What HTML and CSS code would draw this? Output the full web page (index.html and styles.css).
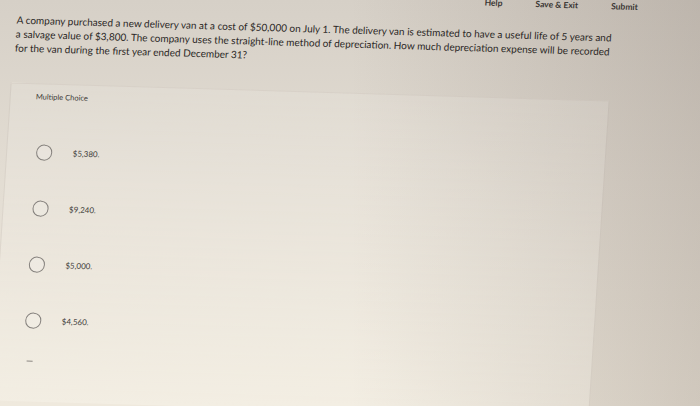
FILE: index.html
```html
<!DOCTYPE html>
<html lang="en">
<head>
<meta charset="utf-8">
<title>Multiple Choice</title>
<link rel="stylesheet" href="styles.css">
</head>
<body>
<div class="page">
  <header class="topbar">
    <nav class="nav">
      <span class="nav-item">Help</span>
      <span class="nav-item">Save &amp; Exit</span>
      <span class="nav-item">Submit</span>
    </nav>
  </header>
  <p class="question">A company purchased a new delivery van at a cost of $50,000 on July 1. The delivery van is estimated to have a useful life of 5 years and<br>a salvage value of $3,800. The company uses the straight-line method of depreciation. How much depreciation expense will be recorded<br>for the van during the first year ended December 31?</p>
  <section class="panel">
    <div class="panel-title">Multiple Choice</div>
    <ul class="choices">
      <li class="choice"><span class="radio"></span><span class="choice-text">$5,380.</span></li>
      <li class="choice"><span class="radio"></span><span class="choice-text">$9,240.</span></li>
      <li class="choice"><span class="radio"></span><span class="choice-text">$5,000.</span></li>
      <li class="choice"><span class="radio"></span><span class="choice-text">$4,560.</span></li>
    </ul>
    <div class="dash"></div>
  </section>
</div>
</body>
</html>
```
FILE: styles.css
```css
html, body {
  margin: 0;
  padding: 0;
  height: 100%;
  overflow: hidden;
}
body {
  width: 700px;
  height: 406px;
  background:
    linear-gradient(to right, rgba(110, 96, 88, 0) 50%, rgba(110, 96, 88, 0.24) 100%),
    linear-gradient(to bottom, #d6d0c7 0%, #e3ddd3 45%, #efe9dd 100%);
  font-family: Lato, "Open Sans", sans-serif;
  color: #35322f;
}
.page {
  margin-top: -30px;
  width: 700px;
  transform-origin: 0 30px;
  transform: matrix(1, 0.03, -0.065, 1, 0, 0);
}
.topbar {
  height: 30px;
  display: flex;
  align-items: center;
  justify-content: flex-end;
  padding-right: 63px;
}
.nav {
  display: flex;
  gap: 33px;
  padding-top: 5px;
}
.nav-item {
  font-size: 8.5px;
  font-weight: 700;
  color: #3a3633;
}
.question {
  margin: 12px 0 0 18px;
  font-size: 10px;
  line-height: 14px;
  white-space: nowrap;
  color: #2a2725;
}
.panel {
  margin: 28px 0 0 16px;
  width: 599px;
  height: 318px;
  box-sizing: border-box;
  padding: 8px 0 0 25px;
  border: 1px solid rgba(120, 108, 98, 0.12);
  border-bottom: 0;
  background: linear-gradient(to bottom, rgba(255, 253, 248, 0.12), rgba(255, 252, 244, 0.25));
}
.panel-title {
  font-size: 7.5px;
  line-height: 10px;
  color: #3d3a37;
}
.choices {
  list-style: none;
  margin: 42px 0 0 4px;
  padding: 0;
  display: flex;
  flex-direction: column;
  gap: 40px;
}
.choice {
  display: flex;
  align-items: center;
  height: 16px;
  gap: 21px;
}
.radio {
  width: 13.5px;
  height: 13.5px;
  border: 1.3px solid #85817d;
  border-radius: 50%;
  background: rgba(255, 255, 255, 0.15);
}
.choice-text {
  font-size: 8px;
  color: #413e3b;
}
.dash {
  margin: 32px 0 0 8px;
  width: 6px;
  height: 1.2px;
  background: #8c8883;
}
```
